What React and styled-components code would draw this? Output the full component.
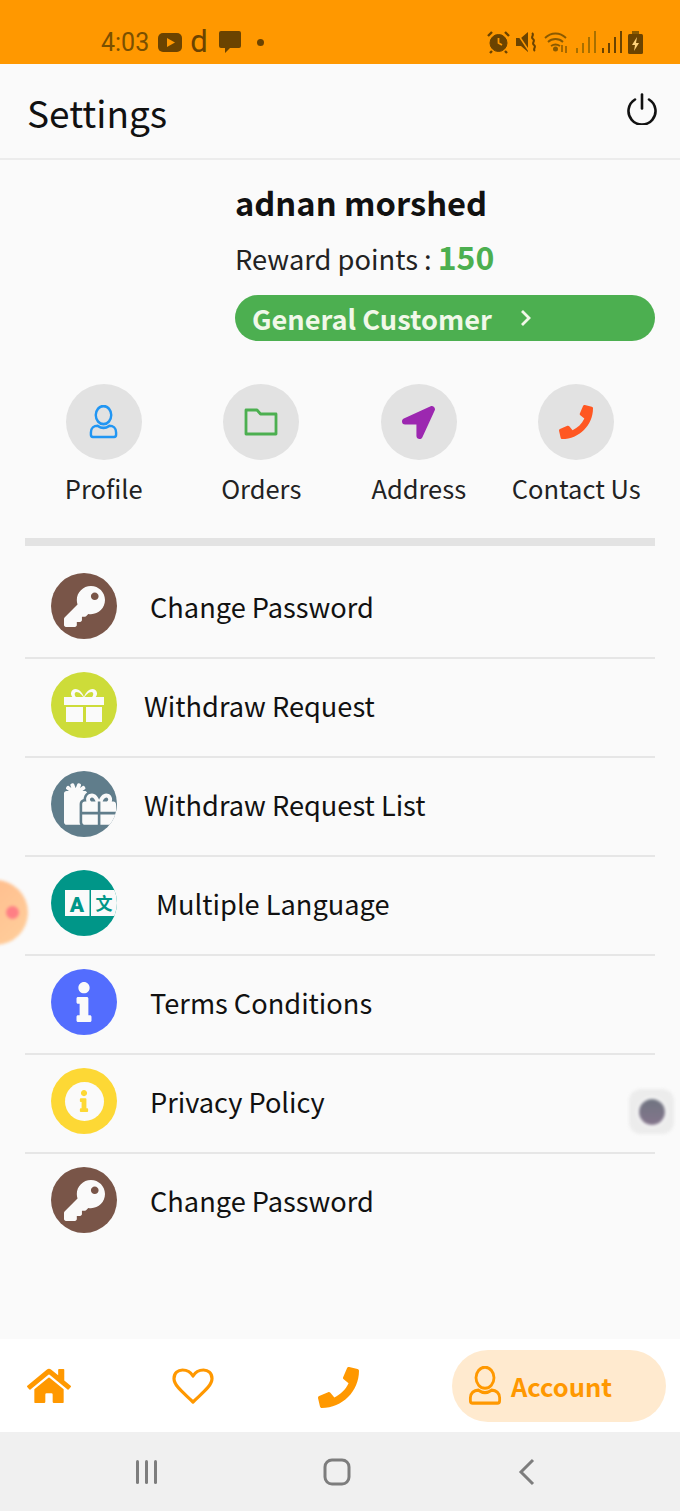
import React from 'react';
import styled, { createGlobalStyle } from 'styled-components';
import { FaKey, FaGifts, FaInfo, FaPhone, FaLocationArrow, FaHome } from 'react-icons/fa';

const ORANGE = '#ff9800';
const BODY_FONT = '"Noto Sans CJK SC", "Noto Sans", sans-serif';

function UserOutline({ size, color }) {
  return (
    <svg width={size} height={size * 1.1} viewBox="0 0 32 32" preserveAspectRatio="none" fill="none" stroke={color} strokeWidth="2.500">
      <ellipse cx="16" cy="9.5" rx="8" ry="8.500" />
      <path d="M10 19.5c-4 0-7 2.500-7 6.200V28a2 2 0 0 0 2 2h22a2 2 0 0 0 2-2v-2.300c0-3.700-3-6.200-7-6.200-2 1.300-4 2-6 2s-4-.7-6-2z" />
    </svg>
  );
}

function FolderOutline() {
  return (
    <svg width="34" height="28" viewBox="0 0 34 28" fill="none" stroke="#4caf50" strokeWidth="2.800" strokeLinejoin="round">
      <path d="M2 2h11l3.500 4H32v20H2z" />
    </svg>
  );
}

function GiftIcon() {
  return (
    <svg width="42" height="34" viewBox="0 0 42 34" fill="#fafafa">
      <path d="M10.500 10C6 7 8 1 12.500 1c4 0 7 4 8.500 8 1.500-4 4.500-8 8.500-8C34 1 36 7 31.500 10l-2.500-1c2-2 1.500-5-.5-5-3 0-5.500 3-7.500 6-2-3-4.500-6-7.500-6-2 0-2.500 3-.5 5z" />
      <rect x="1" y="9" width="40" height="8" />
      <rect x="3" y="19" width="17" height="15" />
      <rect x="23" y="19" width="16" height="15" />
    </svg>
  );
}

function LanguageIcon() {
  return (
    <LanguageSvg viewBox="0 0 52 28">
      <rect x="0" y="1" width="24.500" height="26" fill="#fafafa" />
      <rect x="26" y="1" width="26" height="26" fill="#fafafa" />
      <text x="12" y="22.500" textAnchor="middle" fontFamily="Roboto, sans-serif" fontWeight="900" fontSize="21" fill="#009688">A</text>
      <text x="39" y="21" textAnchor="middle" fontFamily="'Noto Sans CJK SC', sans-serif" fontWeight="700" fontSize="17" fill="#009688">文</text>
    </LanguageSvg>
  );
}

function PrivacyIcon() {
  return (
    <PrivacyDisc>
      <FaInfo size={22} color="#fdd835" />
    </PrivacyDisc>
  );
}

function PowerIcon() {
  return (
    <svg width="34" height="32" viewBox="0 0 34 32" fill="none" stroke="#111" strokeWidth="2.600" strokeLinecap="round">
      <path d="M17 1.500v14" />
      <path d="M10 6.500a13.500 13.500 0 1 0 14 0" />
    </svg>
  );
}

function HeartOutline() {
  return (
    <svg width="42" height="36" viewBox="0 0 42 36" fill="none" stroke={ORANGE} strokeWidth="3.200" strokeLinejoin="round">
      <path d="M21 34C12 25 2 18 2 10.500 2 5 6 2 10.500 2 15 2 19 4.500 21 8c2-3.500 6-6 10.500-6C36 2 40 5 40 10.500 40 18 30 25 21 34z" />
    </svg>
  );
}

const StatusGlyphs = {
  youtube: (
    <svg width="24" height="19" viewBox="0 0 24 19">
      <rect width="24" height="19" rx="5" fill="#6b4300" />
      <path d="M9 5l8 4.500-8 4.500z" fill={ORANGE} />
    </svg>
  ),
  chat: (
    <svg width="22" height="22" viewBox="0 0 22 22" fill="#6b4300">
      <path d="M2 0h18a2 2 0 0 1 2 2v13a2 2 0 0 1-2 2H11l-5 5v-5H2a2 2 0 0 1-2-2V2a2 2 0 0 1 2-2z" />
    </svg>
  ),
  alarm: (
    <svg width="23" height="24" viewBox="0 0 23 24" fill="none" stroke="#6b4300">
      <circle cx="11.500" cy="13" r="8.500" fill="#6b4300" />
      <path d="M11.500 8v5l3.500 2" stroke={ORANGE} strokeWidth="1.800" />
      <path d="M1 6l4-4M22 6l-4-4M5 21l-2 2M18 21l2 2" strokeWidth="2.400" />
    </svg>
  ),
  mute: (
    <svg width="22" height="22" viewBox="0 0 22 22">
      <path d="M0 7h5l7-6v20l-7-6H0z" fill="#6b4300" />
      <path d="M1 2l12 18" stroke={ORANGE} strokeWidth="1.500" />
      <path d="M16 2c3 2-2 4 1 6s-2 4 1 6-2 4 1 6" fill="none" stroke="#6b4300" strokeWidth="2" />
    </svg>
  ),
  wifi: (
    <svg width="26" height="23" viewBox="0 0 26 23" fill="none" stroke="#8a5a00" strokeWidth="1.800">
      <path d="M1 7c6-6 15-6 21 0M4 11c4-4 11-4 15 0M7 15c3-2 6-2 9 0" />
      <circle cx="11.500" cy="18" r="1.600" fill="#8a5a00" />
      <path d="M18 14v7M22 22v-7" strokeWidth="1.500" />
    </svg>
  ),
  battery: (
    <svg width="15" height="23" viewBox="0 0 15 23">
      <rect x="4" y="0" width="7" height="3" fill="#8a5a00" />
      <rect x="0" y="3" width="15" height="20" rx="1.500" fill="#6b4300" />
      <path d="M9 6l-5 8h3l-1 6 5-8H8z" fill="#ffd27a" />
    </svg>
  ),
};

function SignalBars({ color }) {
  return (
    <svg width="20" height="22" viewBox="0 0 20 22" fill={color}>
      <rect x="0" y="17" width="2" height="5" />
      <rect x="6" y="12" width="2" height="10" />
      <rect x="12" y="6" width="2" height="16" />
      <rect x="18" y="0" width="2" height="22" />
    </svg>
  );
}

function GiftsIcon(props) {
  return <GiftsGlyph {...props} />;
}

function CallIcon() {
  return <NavPhone size={41} color={ORANGE} />;
}

const shortcuts = [
  { label: 'Profile', icon: <UserOutline size={31} color="#2196f3" /> },
  { label: 'Orders', icon: <FolderOutline /> },
  { label: 'Address', icon: <FaLocationArrow size={33} color="#9c27b0" /> },
  { label: 'Contact Us', icon: <FaPhone size={34} color="#ff5722" /> },
];

const menuItems = [
  { label: 'Change Password', color: '#795548', indent: 33, icon: <FaKey size={41} color="#fafafa" /> },
  { label: 'Withdraw Request', color: '#cddc39', indent: 27, icon: <GiftIcon /> },
  { label: 'Withdraw Request List', color: '#607d8b', indent: 27, icon: <GiftsIcon size={52} color="#fafafa" /> },
  { label: 'Multiple Language', color: '#009688', indent: 39, icon: <LanguageIcon /> },
  { label: 'Terms Conditions', color: '#536dfe', indent: 33, icon: <FaInfo size={40} color="#fafafa" /> },
  { label: 'Privacy Policy', color: '#fdd835', indent: 33, icon: <PrivacyIcon /> },
  { label: 'Change Password', color: '#795548', indent: 33, icon: <FaKey size={41} color="#fafafa" /> },
];

export default function App() {
  return (
    <Page>
      <GlobalStyle />
      <StatusBar>
        <StatusLeft>
          <StatusTime>4:03</StatusTime>
          {StatusGlyphs.youtube}
          <StatusLetter>d</StatusLetter>
          {StatusGlyphs.chat}
          <StatusDot />
        </StatusLeft>
        <StatusRight>
          {StatusGlyphs.alarm}
          {StatusGlyphs.mute}
          {StatusGlyphs.wifi}
          <SignalBars color="#a87000" />
          <SignalBars color="#6b4300" />
          {StatusGlyphs.battery}
        </StatusRight>
      </StatusBar>

      <Header>
        <Title>Settings</Title>
        <PowerIcon />
      </Header>

      <Main>
        <ProfileBlock>
          <UserName>adnan morshed</UserName>
          <Reward>
            Reward points :
            <RewardValue>150</RewardValue>
          </Reward>
          <TierPill>
            General Customer
            <TierChevron viewBox="0 0 12 18">
              <path d="M2 2l7 7-7 7" fill="none" stroke="#f1f8e9" strokeWidth="2.800" />
            </TierChevron>
          </TierPill>
        </ProfileBlock>

        <Shortcuts>
          {shortcuts.map((item) => (
            <Shortcut key={item.label}>
              <ShortcutDisc>{item.icon}</ShortcutDisc>
              <ShortcutLabel>{item.label}</ShortcutLabel>
            </Shortcut>
          ))}
        </Shortcuts>

        <ThickDivider />

        <Menu>
          {menuItems.map((item, index) => (
            <MenuRow key={`${item.label}-${index}`}>
              <MenuDisc $color={item.color}>{item.icon}</MenuDisc>
              <MenuLabel $indent={item.indent}>{item.label}</MenuLabel>
            </MenuRow>
          ))}
        </Menu>
      </Main>

      <BottomNav>
        <NavIcons>
          <NavSlot><FaHome size={46} color={ORANGE} /></NavSlot>
          <NavSlot><HeartOutline /></NavSlot>
          <NavSlot><CallIcon /></NavSlot>
        </NavIcons>
        <AccountPill>
          <UserOutline size={36} color={ORANGE} />
          <AccountLabel>Account</AccountLabel>
        </AccountPill>
      </BottomNav>

      <SystemBar>
        <svg width="26" height="26" viewBox="0 0 26 26" fill="#7d7d7d">
          <rect x="2" y="1" width="3" height="24" rx="1.500" />
          <rect x="11" y="1" width="3" height="24" rx="1.500" />
          <rect x="20" y="1" width="3" height="24" rx="1.500" />
        </svg>
        <svg width="28" height="28" viewBox="0 0 28 28" fill="none" stroke="#7d7d7d" strokeWidth="3">
          <rect x="2" y="2" width="24" height="24" rx="7" />
        </svg>
        <svg width="18" height="28" viewBox="0 0 18 28" fill="none" stroke="#7d7d7d" strokeWidth="3">
          <path d="M15 2L3 14l12 12" />
        </svg>
      </SystemBar>

      <FloatingBlob><BlobDot /></FloatingBlob>
      <AssistiveButton><AssistiveLens /></AssistiveButton>
    </Page>
  );
}

const GlobalStyle = createGlobalStyle`
  body {
    margin: 0;
    background: #fafafa;
    font-family: ${BODY_FONT};
  }
`;

const Page = styled.div`
  position: relative;
  display: flex;
  flex-direction: column;
  width: 680px;
  height: 1511px;
  overflow: hidden;
  color: #111;
  background: #fafafa;
`;

const StatusBar = styled.div`
  display: flex;
  justify-content: space-between;
  align-items: center;
  height: 64px;
  padding: 20px 37px 0 101px;
  box-sizing: border-box;
  background: ${ORANGE};
`;

const StatusLeft = styled.div`
  display: flex;
  align-items: center;
  gap: 9px;
`;

const StatusRight = styled.div`
  display: flex;
  align-items: center;
  gap: 6px;
`;

const StatusTime = styled.span`
  font-family: Roboto, sans-serif;
  font-size: 25px;
  color: #7a5000;
`;

const StatusLetter = styled.span`
  margin: 0 2px 0 -1px;
  font-family: Roboto, sans-serif;
  font-size: 31px;
  line-height: 30px;
  color: #6b4300;
`;

const StatusDot = styled.span`
  width: 7px;
  height: 7px;
  margin-left: 7px;
  border-radius: 50%;
  background: #6b4300;
`;

const Header = styled.header`
  display: flex;
  justify-content: space-between;
  align-items: center;
  height: 96px;
  padding: 0 21px 4px 27px;
  box-sizing: border-box;
  border-bottom: 2px solid #ececec;
`;

const Title = styled.h1`
  margin: 5px 0 0;
  font-size: 37px;
  font-weight: 400;
  line-height: 44px;
`;

const Main = styled.main`
  flex: 1;
  padding: 0 25px;
`;

const ProfileBlock = styled.section`
  padding: 20px 0 0 210px;
`;

const UserName = styled.div`
  font-size: 32.700px;
  font-weight: 700;
  line-height: 44px;
`;

const Reward = styled.div`
  margin-top: 10px;
  font-size: 27.300px;
  line-height: 44px;
  color: #222;
`;

const RewardValue = styled.span`
  margin-left: 6px;
  font-size: 32px;
  font-weight: 700;
  color: #4caf50;
`;

const TierPill = styled.div`
  display: flex;
  align-items: center;
  height: 46px;
  margin-top: 15px;
  padding-left: 17px;
  border-radius: 23px;
  font-size: 27.200px;
  font-weight: 700;
  color: #f1f8e9;
  background: #4caf50;
`;

const TierChevron = styled.svg`
  width: 12px;
  height: 18px;
  margin-left: 28px;
`;

const Shortcuts = styled.section`
  display: grid;
  grid-template-columns: repeat(4, 1fr);
  margin-top: 43px;
`;

const Shortcut = styled.div`
  display: flex;
  flex-direction: column;
  align-items: center;
`;

const ShortcutDisc = styled.div`
  display: flex;
  justify-content: center;
  align-items: center;
  width: 76px;
  height: 76px;
  border-radius: 50%;
  background: #e2e2e2;
`;

const ShortcutLabel = styled.div`
  margin-top: 10px;
  font-size: 25.500px;
  line-height: 36px;
  color: #222;
`;

const ThickDivider = styled.div`
  height: 8px;
  margin-top: 32px;
  background: #e3e3e3;
`;

const Menu = styled.ul`
  margin: 14px 0 0;
  padding: 0;
  list-style: none;
`;

const MenuRow = styled.li`
  display: flex;
  align-items: center;
  padding: 13px 0 18px 26px;
  border-bottom: 2px solid #e6e6e6;

  &:last-child {
    border-bottom: none;
  }
`;

const MenuDisc = styled.div`
  display: flex;
  flex-shrink: 0;
  justify-content: center;
  align-items: center;
  width: 66px;
  height: 66px;
  overflow: hidden;
  border-radius: 50%;
  background: ${(props) => props.$color};
`;

const GiftsGlyph = styled(FaGifts)`
  flex-shrink: 0;
  margin-left: 12px;
`;

const LanguageSvg = styled.svg`
  flex-shrink: 0;
  width: 52px;
  height: 28px;
  margin-left: 13px;
`;

const PrivacyDisc = styled.div`
  display: flex;
  justify-content: center;
  align-items: center;
  width: 39px;
  height: 39px;
  border-radius: 50%;
  background: #fafafa;
`;

const MenuLabel = styled.div`
  margin-left: ${(props) => props.$indent}px;
  font-size: 27.200px;
  line-height: 40px;
`;

const BottomNav = styled.nav`
  display: flex;
  justify-content: space-between;
  align-items: center;
  height: 93px;
  padding: 0 14px 0 27px;
  box-sizing: border-box;
  background: #fff;
`;

const NavIcons = styled.div`
  display: flex;
  align-items: center;
  gap: 100px;
`;

const NavSlot = styled.div`
  display: flex;
  justify-content: center;
  align-items: center;
  width: 44px;
`;

const NavPhone = styled(FaPhone)`
  margin: 4px 0 0 2px;
`;

const AccountPill = styled.div`
  display: flex;
  flex-shrink: 0;
  align-items: center;
  gap: 8px;
  width: 214px;
  height: 72px;
  padding-left: 15px;
  box-sizing: border-box;
  border-radius: 36px;
  background: #ffeacf;
`;

const AccountLabel = styled.span`
  font-size: 25.500px;
  font-weight: 700;
  color: ${ORANGE};
`;

const SystemBar = styled.div`
  display: grid;
  grid-template-columns: repeat(3, 190px);
  justify-content: center;
  justify-items: center;
  align-items: center;
  height: 79px;
  padding-right: 6px;
  box-sizing: border-box;
  background: #f0f0f0;
`;

const FloatingBlob = styled.div`
  position: absolute;
  top: 880px;
  left: -37px;
  display: flex;
  justify-content: flex-end;
  align-items: center;
  width: 65px;
  height: 65px;
  padding-right: 9px;
  box-sizing: border-box;
  border-radius: 50%;
  background: linear-gradient(135deg, #ffb98a, #ffcf9c);
  filter: blur(1.500px);
`;

const BlobDot = styled.span`
  width: 13px;
  height: 13px;
  border-radius: 50%;
  background: #ff7f85;
`;

const AssistiveButton = styled.div`
  position: absolute;
  top: 1089px;
  left: 629px;
  display: flex;
  justify-content: center;
  align-items: center;
  width: 45px;
  height: 45px;
  border-radius: 12px;
  background: #ececec;
  filter: blur(1.500px);
`;

const AssistiveLens = styled.span`
  width: 26px;
  height: 26px;
  border: 2px solid #fafafa;
  border-radius: 50%;
  background: linear-gradient(#6f7480, #84758c);
`;
